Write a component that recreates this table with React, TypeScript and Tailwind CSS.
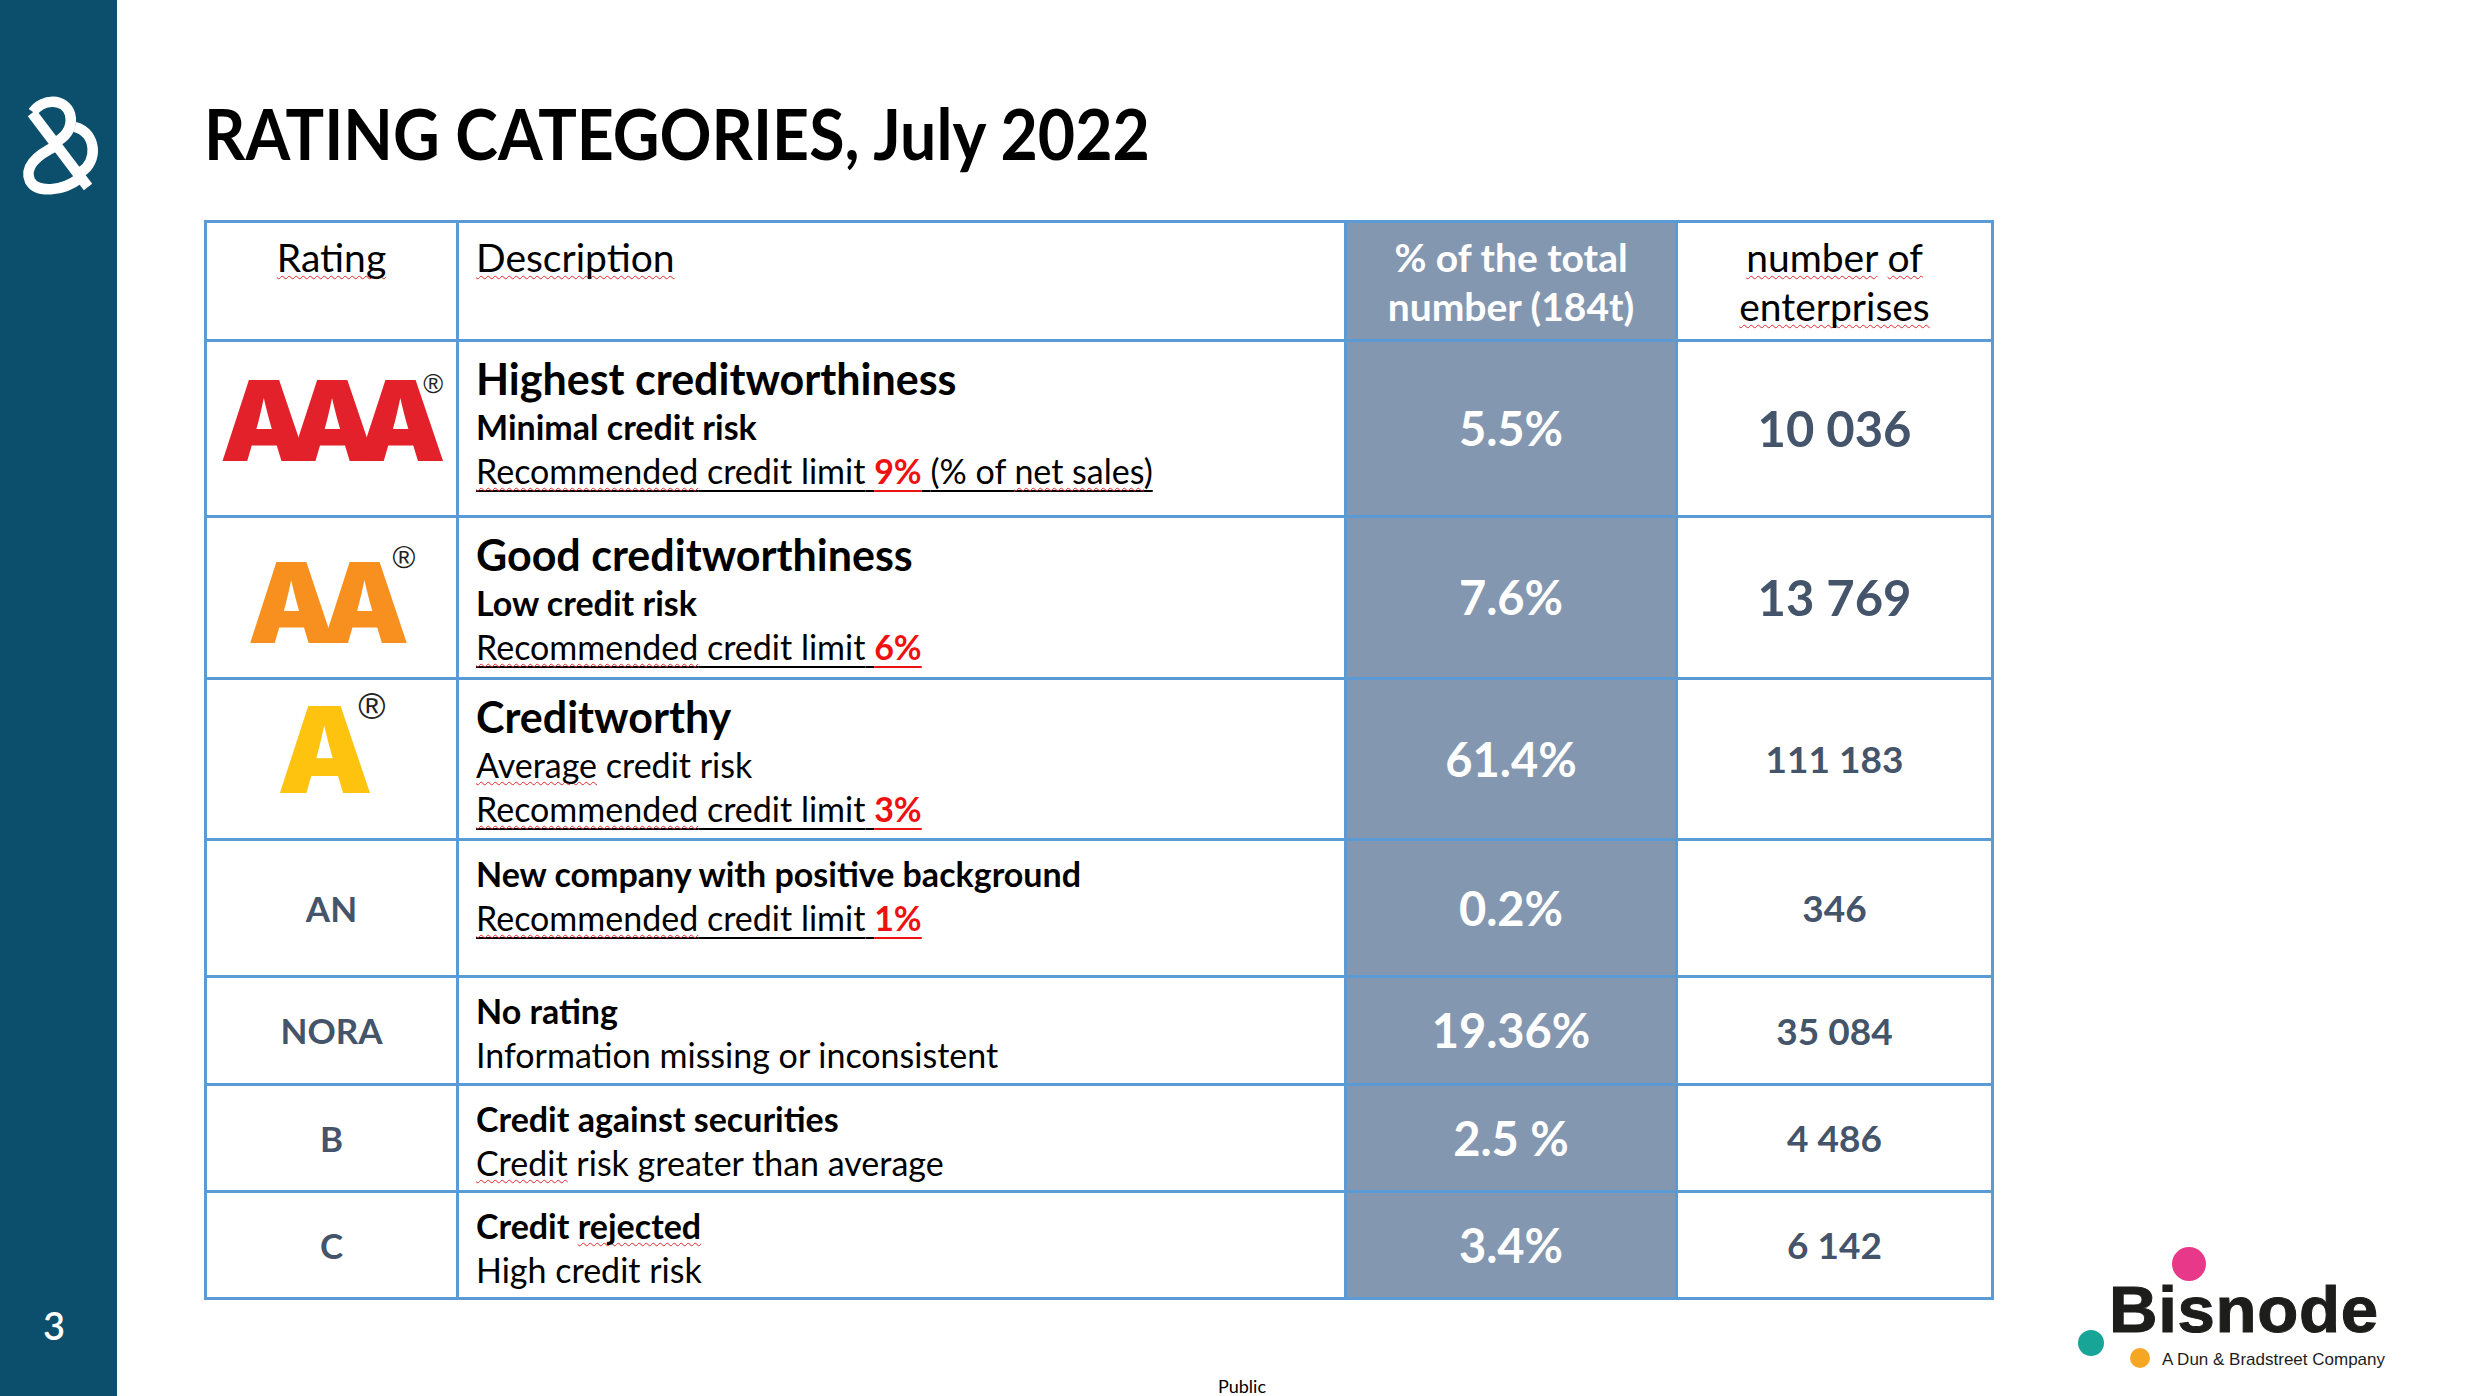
import React from "react";

const CELL = "border-[3px] border-[#5b9bd5]";

function Wavy({ children }: { children: React.ReactNode }) {
  return (
    <span className="underline decoration-wavy decoration-[#e0282e] decoration-1 underline-offset-[3px] [text-decoration-skip-ink:none]">
      {children}
    </span>
  );
}

function Limit({ pct, extra }: { pct: string; extra?: boolean }) {
  return (
    <div className="text-[34px] leading-[44px] text-black whitespace-nowrap">
      <span className="underline decoration-black decoration-2 underline-offset-[6px] [text-decoration-skip-ink:none]">
        <Wavy>Recommended</Wavy> credit limit{" "}
      </span>
      <span className="font-bold text-[#ee1111] underline decoration-[#ee1111] decoration-2 underline-offset-[6px] [text-decoration-skip-ink:none]">
        {pct}
      </span>
      {extra && (
        <span className="underline decoration-black decoration-2 underline-offset-[6px] [text-decoration-skip-ink:none]">
          {" "}(% of <Wavy>net sales</Wavy>)
        </span>
      )}
    </div>
  );
}

function LogoAAA() {
  return (
    <div className="flex items-start">
      <span className="font-['Inter',sans-serif] font-black text-[112px] leading-none tracking-[-0.2em] text-[#e2212b]">
        AAA
      </span>
      <span className="mt-[7px] font-['Liberation_Sans',sans-serif] text-[27px] leading-none text-[#222]">®</span>
    </div>
  );
}

function LogoAA() {
  return (
    <div className="flex items-start">
      <span className="mt-[5px] font-['Inter',sans-serif] font-black text-[111px] leading-none tracking-[-0.15em] text-[#f7901e]">
        AA
      </span>
      <span className="font-['Liberation_Sans',sans-serif] text-[31px] leading-none text-[#222]">®</span>
    </div>
  );
}

function LogoA() {
  return (
    <div className="flex items-start">
      <span className="mt-[2px] font-['Inter',sans-serif] font-black text-[120px] leading-none tracking-[-0.12em] text-[#fdc30f]">
        A
      </span>
      <span className="font-['Liberation_Sans',sans-serif] text-[37px] leading-none text-[#222]">®</span>
    </div>
  );
}

function Title({ children }: { children: React.ReactNode }) {
  return <div className="text-[43px] leading-[52px] font-bold text-black whitespace-nowrap">{children}</div>;
}

function Bold({ children }: { children: React.ReactNode }) {
  return <div className="text-[34px] leading-[44px] font-bold text-black whitespace-nowrap">{children}</div>;
}

function Plain({ children }: { children: React.ReactNode }) {
  return <div className="text-[34px] leading-[44px] text-black whitespace-nowrap">{children}</div>;
}

function Pct({ children }: { children: React.ReactNode }) {
  return (
    <td className={`${CELL} bg-[#8497b0] text-white text-[47px] font-bold text-center align-middle`}>
      {children}
    </td>
  );
}

function Num({ children, big }: { children: React.ReactNode; big?: boolean }) {
  return (
    <td
      className={`${CELL} text-[#44546a] font-bold text-center align-middle ${big ? "text-[49px]" : "text-[37px]"}`}
    >
      {children}
    </td>
  );
}

function RatingText({ children }: { children: React.ReactNode }) {
  return (
    <td className={`${CELL} text-[#44546a] font-bold text-[35px] text-center align-middle`}>{children}</td>
  );
}

function Desc({ children }: { children: React.ReactNode }) {
  return <td className={`${CELL} align-top pl-[17px] pt-[11px]`}>{children}</td>;
}

export default function App() {
  return (
    <div className="relative w-[2485px] h-[1396px] bg-white flex overflow-hidden font-['Lato',sans-serif]">
      <aside className="w-[117px] h-full shrink-0 bg-[#0b4f6c] flex flex-col justify-between">
        <svg className="mt-[90px]" width="117" height="110" viewBox="0 90 117 110" fill="none">
          <g stroke="#ffffff" strokeWidth="10.5" strokeLinecap="butt" strokeLinejoin="round">
            <path d="M32 113 L88 187" />
            <path d="M33 112 C43 98 65 98 70 114 C73 126 67 135 58 141" />
            <path d="M75 127 C97 133 98 162 81 172" />
            <path d="M56 146 C35 156 24 168 30 181 C37 193 62 192 80 178" />
          </g>
        </svg>
        <div className="mb-[52px] ml-[43px] text-white text-[38px] leading-none font-semibold">3</div>
      </aside>

      <main className="flex-1 pl-[87px] pt-[98px]">
        <h1 className="text-[70px] leading-none font-bold text-black whitespace-nowrap scale-x-[0.92] origin-left">
          RATING CATEGORIES, July 2022
        </h1>

        <table className="mt-[52px] border-collapse table-fixed w-[1787px]">
          <colgroup>
            <col className="w-[252px]" />
            <col className="w-[888px]" />
            <col className="w-[331px]" />
            <col className="w-[316px]" />
          </colgroup>
          <tbody>
            <tr className="h-[119px]">
              <td className={`${CELL} align-top text-center pt-[10px] text-[39px] leading-[49px] text-black`}>
                <Wavy>Rating</Wavy>
              </td>
              <td className={`${CELL} align-top pl-[17px] pt-[10px] text-[39px] leading-[49px] text-black`}>
                <Wavy>Description</Wavy>
              </td>
              <td
                className={`${CELL} bg-[#8497b0] align-top text-center pt-[10px] text-[39px] leading-[49px] font-bold text-white`}
              >
                % of the total
                <br />
                number (184t)
              </td>
              <td className={`${CELL} align-top text-center pt-[10px] text-[39px] leading-[49px] text-black`}>
                <Wavy>number</Wavy> <Wavy>of</Wavy>
                <br />
                <Wavy>enterprises</Wavy>
              </td>
            </tr>

            <tr className="h-[176px]">
              <td className={`${CELL} align-top pt-[22px]`}>
                <div className="flex justify-center">
                  <LogoAAA />
                </div>
              </td>
              <Desc>
                <Title>Highest creditworthiness</Title>
                <Bold>Minimal credit risk</Bold>
                <Limit pct="9%" extra />
              </Desc>
              <Pct>5.5%</Pct>
              <Num big>10 036</Num>
            </tr>

            <tr className="h-[162px]">
              <td className={`${CELL} align-top pt-[24px]`}>
                <div className="flex justify-center">
                  <LogoAA />
                </div>
              </td>
              <Desc>
                <Title>Good creditworthiness</Title>
                <Bold>Low credit risk</Bold>
                <Limit pct="6%" />
              </Desc>
              <Pct>7.6%</Pct>
              <Num big>13 769</Num>
            </tr>

            <tr className="h-[161px]">
              <td className={`${CELL} align-top pt-[8px]`}>
                <div className="flex justify-center">
                  <LogoA />
                </div>
              </td>
              <Desc>
                <Title>Creditworthy</Title>
                <Plain>
                  <Wavy>Average</Wavy> credit risk
                </Plain>
                <Limit pct="3%" />
              </Desc>
              <Pct>61.4%</Pct>
              <Num>111 183</Num>
            </tr>

            <tr className="h-[137px]">
              <RatingText>AN</RatingText>
              <Desc>
                <Bold>New company with positive background</Bold>
                <Limit pct="1%" />
              </Desc>
              <Pct>0.2%</Pct>
              <Num>346</Num>
            </tr>

            <tr className="h-[108px]">
              <RatingText>NORA</RatingText>
              <Desc>
                <Bold>No rating</Bold>
                <Plain>Information missing or inconsistent</Plain>
              </Desc>
              <Pct>19.36%</Pct>
              <Num>35 084</Num>
            </tr>

            <tr className="h-[107px]">
              <RatingText>B</RatingText>
              <Desc>
                <Bold>Credit against securities</Bold>
                <Plain>
                  <Wavy>Credit</Wavy> risk greater than average
                </Plain>
              </Desc>
              <Pct>2.5 %</Pct>
              <Num>4 486</Num>
            </tr>

            <tr className="h-[107px]">
              <RatingText>C</RatingText>
              <Desc>
                <Bold>
                  Credit <Wavy>rejected</Wavy>
                </Bold>
                <Plain>High credit risk</Plain>
              </Desc>
              <Pct>3.4%</Pct>
              <Num>6 142</Num>
            </tr>
          </tbody>
        </table>
      </main>

      {/* Bisnode logo */}
      <div className="absolute left-[2172px] top-[1247px] w-[34px] h-[34px] rounded-full bg-[#e8388a]" />
      <div className="absolute left-[2078px] top-[1330px] w-[26px] h-[26px] rounded-full bg-[#16a596]" />
      <div className="absolute left-[2130px] top-[1348px] w-[20px] h-[20px] rounded-full bg-[#f5a623]" />
      <div className="absolute left-[2109px] top-[1278px] text-[64px] leading-none font-bold tracking-[0.01em] scale-x-[1.05] origin-left text-[#1d1d1b] [-webkit-text-stroke:1px_#1d1d1b] font-['Liberation_Sans',sans-serif]">
        Bisnode
      </div>
      <div className="absolute left-[2162px] top-[1351px] text-[17px] leading-none text-[#1d1d1b] font-['Liberation_Sans',sans-serif] whitespace-nowrap">
        A Dun &amp; Bradstreet Company
      </div>

      <div className="absolute left-[1218px] top-[1377px] text-[18px] leading-none text-black">Public</div>
    </div>
  );
}
